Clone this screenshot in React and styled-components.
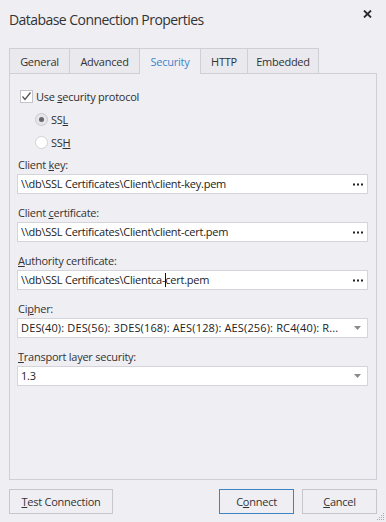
import React from "react";
import styled, { createGlobalStyle } from "styled-components";

const Global = createGlobalStyle`
  html, body { margin: 0; padding: 0; background: #efeff3; }
  body {
    font-family: "Open Sans", "Noto Sans", sans-serif;
    font-size: 11px;
    letter-spacing: -0.25px;
    color: #2e2e2e;
  }
  * { box-sizing: border-box; }
`;

const Window = styled.div`
  position: relative;
  width: 386px;
  height: 522px;
  display: flex;
  flex-direction: column;
  background: #efeff3;
  overflow: hidden;
`;

const Header = styled.div`
  height: 48px;
  display: flex;
  align-items: flex-start;
  justify-content: space-between;
  padding: 10px 14px 0 9px;
`;

const Title = styled.div`
  font-size: 14px;
  line-height: 20px;
  letter-spacing: -0.55px;
  color: #333;
`;

const Close = styled.div`
  width: 9px;
  height: 8px;
  display: flex;
`;

const TabRow = styled.div`
  display: flex;
  height: 25px;
  padding-left: 9px;
  position: relative;
  z-index: 1;
`;

const Tab = styled.div`
  width: ${(p) => p.$w}px;
  height: ${(p) => (p.$active ? 26 : 25)}px;
  margin-left: ${(p) => (p.$first ? 0 : -1)}px;
  border: 1px solid #cfcfd6;
  border-bottom: none;
  background: ${(p) => (p.$active ? "#efeff3" : "#e9e9ee")};
  color: ${(p) => (p.$active ? "#3a86cc" : "#333")};
  display: flex;
  align-items: center;
  justify-content: center;
  padding-bottom: ${(p) => (p.$active ? 1 : 0)}px;
  position: relative;
  z-index: ${(p) => (p.$active ? 2 : 1)};
`;

const Panel = styled.div`
  margin: 0 9px 0 9px;
  height: 407px;
  border: 1px solid #cfcfd6;
  padding: 11px 8px 0 7px;
  display: flex;
  flex-direction: column;
`;

const OptionRow = styled.div`
  height: 23px;
  display: flex;
  align-items: center;
  gap: 3px;
  padding-left: ${(p) => p.$indent}px;
`;

const CheckBox = styled.div`
  width: 13px;
  height: 13px;
  border: 1px solid #c3c3c9;
  background: #fff;
  display: flex;
  align-items: center;
  justify-content: center;
`;

const Radio = styled.div`
  width: 13px;
  height: 13px;
  border-radius: 50%;
  border: 1px solid ${(p) => (p.$on ? "#cacace" : "#d2d2d6")};
  background: ${(p) => (p.$on ? "#e6e6ea" : "#fff")};
  display: flex;
  align-items: center;
  justify-content: center;
`;

const Dot = styled.div`
  width: 5px;
  height: 5px;
  border-radius: 50%;
  background: #666;
`;

const Fields = styled.div`
  margin-top: 3px;
  display: flex;
  flex-direction: column;
  gap: 11px;
`;

const Field = styled.div`
  display: flex;
  flex-direction: column;
  gap: 1px;
`;

const Label = styled.div`
  height: 16px;
  line-height: 16px;
  padding-left: 1px;
  color: #333;
`;

const Box = styled.div`
  height: 20px;
  border: 1px solid #d4d4da;
  background: #fff;
  display: flex;
  align-items: center;
  padding: 0 3px 0 3px;
  color: #222;
`;

const BoxText = styled.div`
  flex: 1;
  white-space: nowrap;
  overflow: hidden;
  line-height: 18px;
  letter-spacing: ${(p) => (p.$wide ? "0.15px" : "-0.25px")};
`;

const Caret = styled.span`
  display: inline-block;
  width: 1px;
  height: 14px;
  background: #111;
  vertical-align: middle;
  margin-right: -1px;
  position: relative;
  top: -1px;
`;

const Footer = styled.div`
  display: flex;
  align-items: center;
  padding: 9px 9px 0 9px;
  gap: 8px;
`;

const Button = styled.div`
  width: ${(p) => p.$w}px;
  height: 25px;
  border: 1px solid ${(p) => (p.$focus ? "#3b84c6" : "#c6c6cd")};
  background: #efeff3;
  display: flex;
  align-items: center;
  justify-content: center;
  color: #333;
  margin-left: ${(p) => (p.$push ? "auto" : "0")};
`;

const Grip = styled.div`
  position: absolute;
  right: 1px;
  bottom: 1px;
  width: 8px;
  height: 8px;
  display: flex;
`;

const Ellipsis = () => (
  <svg width="11" height="3" viewBox="0 0 11 3">
    <rect x="0" y="0.5" width="2" height="2" fill="#222" />
    <rect x="4" y="0.5" width="2" height="2" fill="#222" />
    <rect x="8" y="0.5" width="2" height="2" fill="#222" />
  </svg>
);

const Arrow = () => (
  <svg width="7" height="4" viewBox="0 0 7 4" style={{ marginRight: 3 }}>
    <path d="M0 0 L7 0 L3.5 4 Z" fill="#8a8a8a" />
  </svg>
);

const tabs = [
  ["General", 61],
  ["Advanced", 71],
  ["Security", 62],
  ["HTTP", 48],
  ["Embedded", 72],
];

export default function App() {
  return (
    <Window>
      <Global />
      <Header>
        <Title>Database Connection Properties</Title>
        <Close>
          <svg width="9" height="8" viewBox="0 0 9 8">
            <path d="M1 0.5 L8 7.5 M8 0.5 L1 7.5" stroke="#2a2a2a" strokeWidth="1.8" />
          </svg>
        </Close>
      </Header>
      <TabRow>
        {tabs.map(([t, w], i) => (
          <Tab key={t} $w={w} $first={i === 0} $active={t === "Security"}>
            {t}
          </Tab>
        ))}
      </TabRow>
      <Panel>
        <OptionRow $indent={3}>
          <CheckBox>
            <svg width="11" height="11" viewBox="0 0 11 11">
              <path d="M1.5 5.5 L4 8.5 L9.5 1.5" stroke="#555" strokeWidth="1.3" fill="none" />
            </svg>
          </CheckBox>
          <span>
            Use <u>s</u>ecurity protocol
          </span>
        </OptionRow>
        <OptionRow $indent={18}>
          <Radio $on>
            <Dot />
          </Radio>
          <span>
            SS<u>L</u>
          </span>
        </OptionRow>
        <OptionRow $indent={18}>
          <Radio />
          <span>
            SS<u>H</u>
          </span>
        </OptionRow>
        <Fields>
          <Field>
            <Label>
              Client <u>k</u>ey:
            </Label>
            <Box>
              <BoxText>\\db\SSL Certificates\Client\client-key.pem</BoxText>
              <Ellipsis />
            </Box>
          </Field>
          <Field>
            <Label>
              Client <u>c</u>ertificate:
            </Label>
            <Box>
              <BoxText>\\db\SSL Certificates\Client\client-cert.pem</BoxText>
              <Ellipsis />
            </Box>
          </Field>
          <Field>
            <Label>
              <u>A</u>uthority certificate:
            </Label>
            <Box>
              <BoxText>
                \\db\SSL Certificates\Clientca-<Caret />cert.pem
              </BoxText>
              <Ellipsis />
            </Box>
          </Field>
          <Field>
            <Label>
              Ci<u>p</u>her:
            </Label>
            <Box>
              <BoxText $wide>DES(40): DES(56): 3DES(168): AES(128): AES(256): RC4(40): R...</BoxText>
              <Arrow />
            </Box>
          </Field>
          <Field>
            <Label>
              <u>T</u>ransport layer security:
            </Label>
            <Box>
              <BoxText>1.3</BoxText>
              <Arrow />
            </Box>
          </Field>
        </Fields>
      </Panel>
      <Footer>
        <Button $w={104}>
          <span>
            <u>T</u>est Connection
          </span>
        </Button>
        <Button $w={75} $push $focus>
          <span>
            C<u>o</u>nnect
          </span>
        </Button>
        <Button $w={75}>
          <span>
            <u>C</u>ancel
          </span>
        </Button>
      </Footer>
      <Grip>
        <svg width="8" height="8" viewBox="0 0 8 8">
          <rect x="6" y="0" width="1" height="1" fill="#aaa" />
          <rect x="4" y="2" width="1" height="1" fill="#aaa" />
          <rect x="6" y="2" width="1" height="1" fill="#aaa" />
          <rect x="2" y="4" width="1" height="1" fill="#aaa" />
          <rect x="4" y="4" width="1" height="1" fill="#aaa" />
          <rect x="6" y="4" width="1" height="1" fill="#aaa" />
          <rect x="0" y="6" width="1" height="1" fill="#aaa" />
          <rect x="2" y="6" width="1" height="1" fill="#aaa" />
          <rect x="4" y="6" width="1" height="1" fill="#aaa" />
          <rect x="6" y="6" width="1" height="1" fill="#aaa" />
        </svg>
      </Grip>
    </Window>
  );
}
